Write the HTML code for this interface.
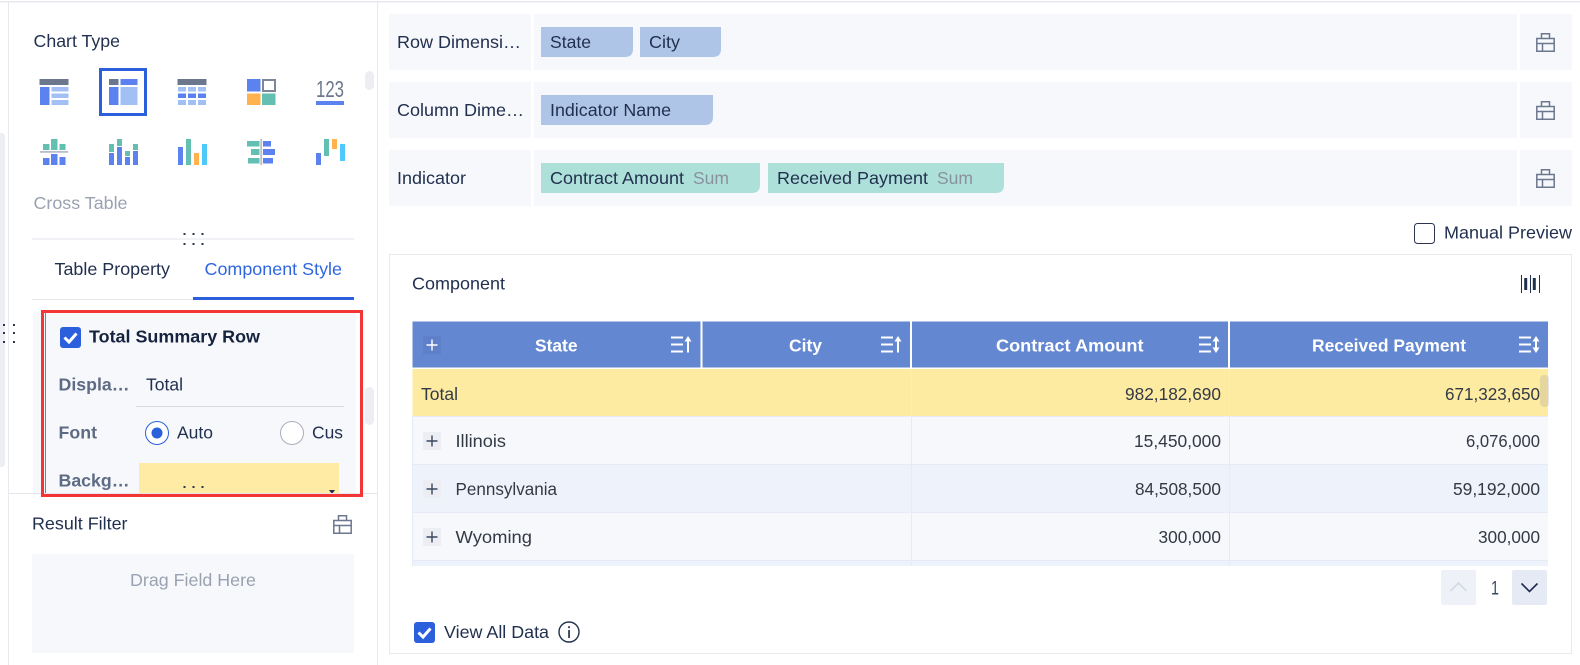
<!DOCTYPE html>
<html><head><meta charset="utf-8"><style>
html,body{margin:0;padding:0;background:#fff;width:1580px;height:665px;overflow:hidden}
svg{display:block}
text{font-family:"Liberation Sans",sans-serif;font-size:17.5px;fill:#22304f}
.b{font-weight:bold}.g{fill:#9aa1b1}.l{fill:#5e6b85;font-weight:bold}.w{fill:#fff;font-weight:bold}.t{fill:#333a45}
</style></head><body>
<svg width="1580" height="665" viewBox="0 0 1580 665" xmlns="http://www.w3.org/2000/svg">
<defs>
<g id="case" fill="none" stroke="#6b778f" stroke-width="1.5"><path d="M.8 5.5H18.2V18.2H.8ZM5.5 5.5V.8H13.5V5.5M.8 10.5H18.2M6.5 10.5V18.2"/></g>
<g id="dots" fill="#2b3550"><rect x="0" y="0" width="2" height="2"/><rect x="9" y="0" width="2" height="2"/><rect x="18" y="0" width="2" height="2"/></g>
<g id="sortup" fill="#fff"><rect x="0" y="1" width="12" height="2"/><rect x="0" y="8" width="12" height="2"/><rect x="0" y="15" width="12" height="2"/><rect x="16" y="4" width="2" height="13"/><path d="M13.5 6L17 .5L20.5 6Z"/></g>
<g id="sortboth" fill="#fff"><rect x="0" y="1" width="12" height="2"/><rect x="0" y="8" width="12" height="2"/><rect x="0" y="15" width="12" height="2"/><rect x="16" y="4" width="2" height="10"/><path d="M13.5 6L17 .5L20.5 6ZM13.5 12L17 17.5L20.5 12Z"/></g>
<g id="check"><rect width="21" height="21" rx="3" fill="#2b5fdc"/><path d="M4.5 10.5L9 15L16.5 6.5" fill="none" stroke="#fff" stroke-width="3"/></g>
<g id="plus"><rect width="18" height="18" fill="#eceef4"/><path d="M3.5 9H14.5M9 3.5V14.5" stroke="#3b4660" stroke-width="1.4"/></g>
</defs>

<!-- frame -->
<rect x="0" y="1" width="1580" height="1.5" fill="#e8e9ee"/>
<rect x="8" y="2" width="1" height="663" fill="#e8e9ee"/>
<rect x="377" y="2" width="1" height="663" fill="#e8e9ee"/>
<path d="M0 133H1.5Q5 133 5 137V463Q5 467 1.5 467H0Z" fill="#eceef3"/>

<!-- chart type -->
<text x="33.5" y="47" textLength="86.5" lengthAdjust="spacingAndGlyphs">Chart Type</text>
<rect x="365" y="71" width="9" height="19" rx="4.5" fill="#eceef3"/>

<!-- icon 1 -->
<rect x="39.5" y="79" width="29" height="6" fill="#6b778c"/>
<rect x="40" y="87" width="9.5" height="18" fill="#5b82ee"/>
<rect x="51.5" y="87" width="17" height="4.5" fill="#a3c0f5"/><rect x="51.5" y="93.5" width="17" height="4.5" fill="#a3c0f5"/><rect x="51.5" y="100" width="17" height="5" fill="#a3c0f5"/>
<!-- icon 2 -->
<rect x="100.5" y="69.5" width="45" height="45" fill="none" stroke="#2b5fdc" stroke-width="3"/>
<rect x="109" y="79" width="9.5" height="6" fill="#6b778c"/><rect x="120.5" y="79" width="17" height="6" fill="#5b82ee"/>
<rect x="109" y="87" width="9.5" height="18" fill="#5b82ee"/><rect x="120.5" y="87" width="17" height="18" fill="#a3c0f5"/>
<!-- icon 3 -->
<rect x="177.5" y="79" width="29" height="6" fill="#6b778c"/>
<g fill="#a3c0f5"><rect x="178" y="87" width="8" height="4.5"/><rect x="188" y="87" width="8" height="4.5"/><rect x="198" y="87" width="8" height="4.5"/><rect x="178" y="100" width="8" height="5"/><rect x="188" y="100" width="8" height="5"/><rect x="198" y="100" width="8" height="5"/></g>
<g fill="#5b82ee"><rect x="178" y="93.5" width="8" height="4.5"/><rect x="188" y="93.5" width="8" height="4.5"/><rect x="198" y="93.5" width="8" height="4.5"/></g>
<!-- icon 4 -->
<rect x="247" y="79" width="13.5" height="12.5" fill="#5b82ee"/>
<rect x="263" y="80" width="12" height="11" fill="none" stroke="#7c8798" stroke-width="2"/>
<rect x="247" y="93.5" width="13.5" height="11.5" fill="#ffb24d"/><rect x="262" y="93.5" width="13.5" height="11.5" fill="#62bfb1"/>
<!-- icon 5 -->
<text x="316" y="97" textLength="28" lengthAdjust="spacingAndGlyphs" style="font-size:23px;fill:#6b778c">123</text>
<rect x="316" y="101" width="28" height="4" fill="#5b82ee"/>
<!-- icon 6 -->
<g fill="#62bfb1"><rect x="43" y="144" width="6.5" height="6"/><rect x="51" y="139" width="6.5" height="11"/><rect x="59.5" y="144" width="6" height="6"/></g>
<rect x="40" y="151" width="28" height="1.8" fill="#b8bec9"/>
<g fill="#5b82ee"><rect x="43" y="158" width="6.5" height="7"/><rect x="51" y="154" width="6.5" height="11"/><rect x="59.5" y="157" width="6" height="8"/></g>
<!-- icon 7 -->
<g fill="#62bfb1"><rect x="109" y="144" width="5" height="8"/><rect x="117" y="139" width="5" height="7"/><rect x="125" y="151" width="5" height="5"/><rect x="133" y="144" width="5" height="6"/></g>
<g fill="#5b82ee"><rect x="109" y="153" width="5" height="12"/><rect x="117" y="147" width="5" height="18"/><rect x="125" y="157" width="5" height="8"/><rect x="133" y="151" width="5" height="14"/></g>
<!-- icon 8 -->
<rect x="178" y="147" width="5" height="18" fill="#5b82ee"/><rect x="186" y="139" width="5" height="26" fill="#62bfb1"/><rect x="194" y="153" width="5" height="12" fill="#ffb24d"/><rect x="202" y="144" width="5" height="21" fill="#4fc8fb"/>
<!-- icon 9 -->
<rect x="260.3" y="139" width="1.8" height="26" fill="#b8bec9"/>
<g fill="#62bfb1"><rect x="247" y="141" width="12.5" height="5.5"/><rect x="251" y="149" width="8.5" height="6"/><rect x="248" y="158" width="11.5" height="5.5"/></g>
<g fill="#5b82ee"><rect x="263" y="141" width="8" height="5.5"/><rect x="263" y="149" width="12" height="6"/><rect x="263" y="158" width="10" height="5.5"/></g>
<!-- icon 10 -->
<rect x="316" y="153" width="5" height="12" fill="#5b82ee"/><rect x="324" y="139" width="5" height="17" fill="#62bfb1"/><rect x="332" y="139" width="5" height="10" fill="#ffb24d"/><rect x="340" y="144" width="5" height="17" fill="#4fc8fb"/>

<text x="33.5" y="209" textLength="94" lengthAdjust="spacingAndGlyphs" class="g">Cross Table</text>

<rect x="32" y="238.5" width="322" height="1" fill="#e4e6ec"/>
<use href="#dots" x="183.5" y="233"/><use href="#dots" x="183.5" y="243"/>

<text x="54.5" y="275" textLength="115.5" lengthAdjust="spacingAndGlyphs">Table Property</text>
<text x="204.5" y="275" textLength="137.5" lengthAdjust="spacingAndGlyphs" style="fill:#2f66e0">Component Style</text>
<rect x="32" y="299" width="322" height="1" fill="#e4e6ec"/>
<rect x="193" y="297" width="161" height="3" fill="#2b5fdc"/>

<!-- style panel -->
<rect x="33" y="312" width="323" height="183" fill="#f7f8fc"/>
<rect x="45" y="312" width="1" height="182" fill="#6f83b8"/>
<use href="#check" x="60" y="327"/>
<text x="89" y="342.5" textLength="171" lengthAdjust="spacingAndGlyphs" class="b" style="fill:#16233f">Total Summary Row</text>
<text x="58.5" y="390.5" textLength="71" lengthAdjust="spacingAndGlyphs" class="l">Displa…</text>
<text x="146" y="390.5" textLength="37" lengthAdjust="spacingAndGlyphs">Total</text>
<rect x="136" y="406" width="208" height="1" fill="#d8dae0"/>
<text x="58.5" y="438.5" textLength="38.5" lengthAdjust="spacingAndGlyphs" class="l">Font</text>
<circle cx="157" cy="433" r="11.5" fill="#fff" stroke="#2b5fdc" stroke-width="1"/><circle cx="157" cy="433" r="5.5" fill="#2b5fdc"/>
<text x="177" y="438.5" textLength="36" lengthAdjust="spacingAndGlyphs">Auto</text>
<circle cx="292" cy="433" r="11.5" fill="#fff" stroke="#a9afbb" stroke-width="1"/>
<text x="312" y="438.5" textLength="31" lengthAdjust="spacingAndGlyphs">Cus</text>
<text x="58.5" y="486.5" textLength="71" lengthAdjust="spacingAndGlyphs" class="l">Backg…</text>
<rect x="139" y="463" width="200" height="31" fill="#ffeba3"/>
<path d="M329 490H335L332 494Z" fill="#22304f"/>
<rect x="9" y="493" width="368" height="1" fill="#e4e6ec"/>
<rect x="42.5" y="311.5" width="319" height="184" fill="none" stroke="#f33535" stroke-width="3"/>
<use href="#dots" x="183.5" y="486"/>
<g fill="#2b3550"><rect x="3" y="324" width="2" height="2"/><rect x="13" y="324" width="2" height="2"/><rect x="3" y="332" width="2" height="2"/><rect x="13" y="332" width="2" height="2"/><rect x="3" y="341" width="2" height="2"/><rect x="13" y="341" width="2" height="2"/></g>
<rect x="365" y="387" width="9" height="38" rx="4.5" fill="#eceef3"/>

<!-- result filter -->
<text x="32" y="529.5" textLength="95.5" lengthAdjust="spacingAndGlyphs">Result Filter</text>
<use href="#case" x="333" y="515"/>
<rect x="32" y="554" width="322" height="99" fill="#f7f8fc"/>
<text x="130" y="586" textLength="126" lengthAdjust="spacingAndGlyphs" class="g">Drag Field Here</text>

<!-- field rows -->
<g fill="#f7f8fc">
<rect x="389" y="14" width="1183" height="56"/><rect x="389" y="82" width="1183" height="56"/><rect x="389" y="150" width="1183" height="56"/>
</g>
<g fill="#fff">
<rect x="531" y="14" width="3" height="192"/><rect x="1517" y="14" width="3" height="192"/>
</g>
<text x="397" y="48" textLength="124" lengthAdjust="spacingAndGlyphs">Row Dimensi…</text>
<text x="397" y="116" textLength="127" lengthAdjust="spacingAndGlyphs">Column Dime…</text>
<text x="397" y="184" textLength="69" lengthAdjust="spacingAndGlyphs">Indicator</text>

<path d="M541 27H633V49Q633 57 625 57H541Z" fill="#afc5e8"/>
<path d="M640 27H721V49Q721 57 713 57H640Z" fill="#afc5e8"/>
<path d="M541 95H713V117Q713 125 705 125H541Z" fill="#afc5e8"/>
<path d="M541 163H760V185Q760 193 752 193H541Z" fill="#aee0da"/>
<path d="M768 163H1004V185Q1004 193 996 193H768Z" fill="#aee0da"/>
<text x="550" y="48" textLength="41" lengthAdjust="spacingAndGlyphs">State</text>
<text x="649" y="48" textLength="31" lengthAdjust="spacingAndGlyphs">City</text>
<text x="550" y="116" textLength="121" lengthAdjust="spacingAndGlyphs">Indicator Name</text>
<text x="550" y="184" textLength="134" lengthAdjust="spacingAndGlyphs">Contract Amount</text>
<text x="693" y="184" textLength="36" lengthAdjust="spacingAndGlyphs" style="fill:#8a919e">Sum</text>
<text x="777" y="184" textLength="151" lengthAdjust="spacingAndGlyphs">Received Payment</text>
<text x="937" y="184" textLength="36" lengthAdjust="spacingAndGlyphs" style="fill:#8a919e">Sum</text>

<use href="#case" x="1536" y="33"/><use href="#case" x="1536" y="101"/><use href="#case" x="1536" y="169"/>

<rect x="1414.5" y="223.5" width="20" height="20" rx="3" fill="#fff" stroke="#2b3550" stroke-width="1"/>
<text x="1444" y="238.5" textLength="128" lengthAdjust="spacingAndGlyphs">Manual Preview</text>

<!-- card -->
<rect x="389.5" y="254.5" width="1182" height="399" fill="#fff" stroke="#e8e9ee" stroke-width="1"/>
<text x="412" y="289.5" textLength="93" lengthAdjust="spacingAndGlyphs">Component</text>
<g fill="#22304f"><rect x="1521" y="275" width="1" height="18"/><rect x="1539" y="275" width="1" height="18"/><rect x="1530" y="275" width="1" height="18"/><rect x="1524.2" y="278" width="3" height="12"/><rect x="1532.8" y="278" width="3" height="12"/></g>

<!-- table -->
<rect x="412.5" y="321.5" width="1135.5" height="46" fill="#6487d2"/>
<rect x="423" y="336" width="18" height="18" fill="#5f80c8"/>
<path d="M426.5 345H437.5M432 339.5V350.5" stroke="#fff" stroke-width="1.4"/>
<rect x="700.5" y="321" width="2" height="47" fill="#fff"/><rect x="910" y="321" width="2" height="47" fill="#fff"/><rect x="1228" y="321" width="2" height="47" fill="#fff"/>
<text x="535" y="351.5" textLength="42.5" lengthAdjust="spacingAndGlyphs" class="w">State</text>
<text x="789" y="351.5" textLength="33" lengthAdjust="spacingAndGlyphs" class="w">City</text>
<text x="996" y="351.5" textLength="147.5" lengthAdjust="spacingAndGlyphs" class="w">Contract Amount</text>
<text x="1312" y="351.5" textLength="154" lengthAdjust="spacingAndGlyphs" class="w">Received Payment</text>
<use href="#sortup" x="671" y="335.5"/><use href="#sortup" x="881" y="335.5"/>
<use href="#sortboth" x="1199" y="335.5"/><use href="#sortboth" x="1519" y="335.5"/>

<rect x="412.5" y="369" width="1135.5" height="47" fill="#feeba2"/>
<rect x="412.5" y="417" width="1135.5" height="47" fill="#f7f8fc"/>
<rect x="412.5" y="465" width="1135.5" height="47" fill="#eef2fa"/>
<rect x="412.5" y="513" width="1135.5" height="47" fill="#f7f8fc"/>
<rect x="412.5" y="561" width="1135.5" height="5" fill="#eef2fa"/>
<g fill="#e6ebf7"><rect x="412" y="416" width="1136" height="1"/><rect x="412" y="464" width="1136" height="1"/><rect x="412" y="512" width="1136" height="1"/><rect x="412" y="560" width="1136" height="1"/><rect x="911" y="369" width="1" height="197"/><rect x="1229" y="369" width="1" height="197"/><rect x="412" y="417" width="1" height="149"/></g>

<text x="421" y="400" textLength="37" lengthAdjust="spacingAndGlyphs" class="t">Total</text>
<text x="1125" y="400" textLength="96" lengthAdjust="spacingAndGlyphs" class="t">982,182,690</text>
<text x="1445" y="400" textLength="95" lengthAdjust="spacingAndGlyphs" class="t">671,323,650</text>
<rect x="1540" y="375" width="9" height="32" rx="4" fill="#8f8f8f" fill-opacity=".22"/>

<use href="#plus" x="423" y="432"/><use href="#plus" x="423" y="480"/><use href="#plus" x="423" y="528"/>
<text x="455.5" y="447" textLength="50.5" lengthAdjust="spacingAndGlyphs" class="t">Illinois</text>
<text x="455.5" y="495" textLength="101.5" lengthAdjust="spacingAndGlyphs" class="t">Pennsylvania</text>
<text x="455.5" y="543" textLength="76.5" lengthAdjust="spacingAndGlyphs" class="t">Wyoming</text>
<text x="1134" y="447" textLength="87" lengthAdjust="spacingAndGlyphs" class="t">15,450,000</text>
<text x="1466" y="447" textLength="74" lengthAdjust="spacingAndGlyphs" class="t">6,076,000</text>
<text x="1135" y="495" textLength="86" lengthAdjust="spacingAndGlyphs" class="t">84,508,500</text>
<text x="1453" y="495" textLength="87" lengthAdjust="spacingAndGlyphs" class="t">59,192,000</text>
<text x="1158.5" y="543" textLength="62.5" lengthAdjust="spacingAndGlyphs" class="t">300,000</text>
<text x="1478" y="543" textLength="62" lengthAdjust="spacingAndGlyphs" class="t">300,000</text>

<!-- pagination -->
<rect x="1441" y="570" width="35" height="35" rx="2" fill="#eef1f8"/>
<path d="M1450.5 591L1458.5 583L1466.5 591" fill="none" stroke="#d5d9e2" stroke-width="1.6"/>
<text x="1491" y="594.5" textLength="8" lengthAdjust="spacingAndGlyphs" style="font-size:19px;fill:#3c4860">1</text>
<rect x="1512" y="570" width="35" height="35" rx="2" fill="#e6eaf5"/>
<path d="M1521.5 583.5L1529.5 591.5L1537.5 583.5" fill="none" stroke="#1d2b4f" stroke-width="1.6"/>

<!-- view all -->
<use href="#check" x="414" y="622"/>
<text x="444" y="638" textLength="105" lengthAdjust="spacingAndGlyphs">View All Data</text>
<circle cx="569" cy="632" r="10" fill="none" stroke="#22304f" stroke-width="1.4"/>
<rect x="568.2" y="630" width="1.7" height="8" fill="#22304f"/><rect x="568.2" y="626.2" width="1.7" height="2" fill="#22304f"/>
</svg>
</body></html>
